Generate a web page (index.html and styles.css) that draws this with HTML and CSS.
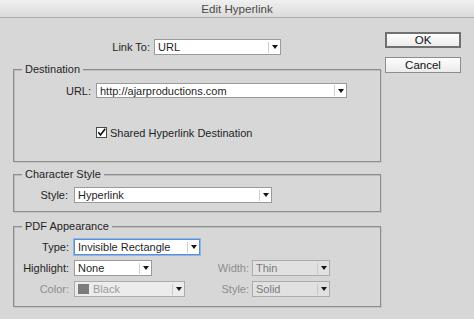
FILE: index.html
```html
<!DOCTYPE html>
<html>
<head>
<meta charset="utf-8">
<link rel="stylesheet" href="styles.css">
</head>
<body>
<div class="titlebar">Edit Hyperlink</div>
<div class="main">
  <div class="left">
    <div class="link-row">
      <span class="lbl lbl-link">Link To:</span>
      <div class="dd w-link"><span class="dd-text">URL</span><span class="dd-arrow"></span></div>
    </div>

    <div class="group g-dest">
      <div class="legend">Destination</div>
      <div class="url-row">
        <span class="lbl lbl-url">URL:</span>
        <div class="dd w-url"><span class="dd-text">http://ajarproductions.com</span><span class="dd-arrow"></span></div>
      </div>
      <div class="check-row">
        <svg class="checkbox" width="11" height="11" viewBox="0 0 11 11">
          <rect x="0.5" y="0.5" width="10" height="10" fill="#fff" stroke="#4a4a4a"/>
          <polyline points="2.3,5.2 4.5,8 9.2,1.8" fill="none" stroke="#111" stroke-width="1.6"/>
        </svg>
        <span>Shared Hyperlink Destination</span>
      </div>
    </div>

    <div class="group g-char">
      <div class="legend">Character Style</div>
      <div class="style-row">
        <span class="lbl lbl-style">Style:</span>
        <div class="dd w-style"><span class="dd-text">Hyperlink</span><span class="dd-arrow"></span></div>
      </div>
    </div>

    <div class="group g-pdf">
      <div class="legend">PDF Appearance</div>
      <div class="pdf-grid">
        <span class="lbl c1">Type:</span>
        <div class="dd w-type focus"><span class="dd-text">Invisible Rectangle</span><span class="dd-arrow"></span></div>

        <span class="lbl c1">Highlight:</span>
        <div class="dd w-high"><span class="dd-text">None</span><span class="dd-arrow"></span></div>
        <span class="lbl c3 dim">Width:</span>
        <div class="dd w-small disabled"><span class="dd-text">Thin</span><span class="dd-arrow"></span></div>

        <span class="lbl c1 dim">Color:</span>
        <div class="dd w-color disabled light"><span class="swatch"></span><span class="dd-text sw-text">Black</span><span class="dd-arrow"></span></div>
        <span class="lbl c3 dim">Style:</span>
        <div class="dd w-small disabled"><span class="dd-text">Solid</span><span class="dd-arrow"></span></div>
      </div>
    </div>
  </div>

  <div class="right">
    <button class="btn btn-default">OK</button>
    <button class="btn">Cancel</button>
  </div>
</div>
</body>
</html>
```

FILE: styles.css
```css
html, body {
  margin: 0;
  padding: 0;
}
body {
  width: 474px;
  height: 319px;
  overflow: hidden;
  background: #d7d7d7;
  font-family: "Liberation Sans", Arial, sans-serif;
  font-size: 11px;
  color: #1f1f1f;
}
.titlebar {
  height: 17px;
  border-bottom: 1px solid #adadad;
  background: linear-gradient(#f0f0f0, #dbdbdb);
  text-align: center;
  line-height: 17px;
  font-size: 11.6px;
  color: #4a4a4a;
}
.main {
  display: flex;
  padding-left: 13px;
}
.left {
  width: 368px;
}
.right {
  margin-left: 4px;
  padding-top: 14px;
  display: flex;
  flex-direction: column;
  gap: 9px;
}
.btn {
  box-sizing: border-box;
  width: 76px;
  height: 16px;
  padding: 0;
  border: 1px solid #8c8c8c;
  background: linear-gradient(#fdfdfd, #ebebeb);
  font-family: "Liberation Sans", Arial, sans-serif;
  font-size: 11.5px;
  line-height: 13px;
  color: #111;
}
.btn-default {
  border: 2px solid #707070;
  line-height: 11px;
}
.lbl {
  text-align: right;
  flex-shrink: 0;
  white-space: nowrap;
}
.dd {
  box-sizing: border-box;
  height: 16px;
  border: 1px solid #9a9a9a;
  background: #fff;
  display: flex;
  align-items: center;
}
.dd-text {
  flex: 1;
  padding-left: 3px;
  line-height: 14px;
  white-space: nowrap;
  overflow: hidden;
}
.dd-arrow {
  width: 11px;
  height: 11px;
  border-left: 1px solid #d0d0d0;
  display: flex;
  align-items: center;
  justify-content: center;
}
.dd-arrow::after {
  content: "";
  border-left: 3px solid transparent;
  border-right: 3px solid transparent;
  border-top: 4px solid #151515;
}
.link-row {
  margin-top: 21px;
  height: 16px;
  display: flex;
  align-items: center;
}
.lbl-link {
  width: 137px;
  margin-right: 4px;
}
.w-link { width: 127px; }

.group {
  box-sizing: border-box;
  border: 1px solid #8e8e8e;
  box-shadow: inset 1px 1px 0 #bcbcbc, 1px 1px 0 #c4c4c4;
}
.legend {
  margin-top: -7px;
  margin-left: 8px;
  padding: 0 3px;
  width: fit-content;
  height: 13px;
  line-height: 13px;
  background: #d7d7d7;
}
.g-dest {
  margin-top: 14px;
  height: 93px;
}
.url-row {
  margin-top: 7px;
  display: flex;
  align-items: center;
}
.lbl-url {
  width: 77px;
  margin-right: 5px;
}
.w-url {
  width: 251px;
  height: 15px;
}
.check-row {
  margin-top: 28px;
  padding-left: 82px;
  height: 13px;
  display: flex;
  align-items: center;
  gap: 3px;
}
.checkbox { flex-shrink: 0; }

.g-char {
  margin-top: 12px;
  height: 38px;
}
.style-row {
  margin-top: 6px;
  display: flex;
  align-items: center;
}
.lbl-style {
  width: 54px;
  margin-right: 6px;
}
.w-style { width: 198px; }

.g-pdf {
  margin-top: 14px;
  height: 81px;
}
.pdf-grid {
  margin-top: 6px;
  display: grid;
  grid-template-columns: 60px 116px 62px 78px;
  grid-auto-rows: 16px;
  row-gap: 5px;
  align-items: center;
}
.c1 { padding-right: 5px; }
.c3 { padding-right: 3px; }
.dim { color: #8e8e8e; }
.w-type {
  grid-column: 2 / span 3;
  width: 126px;
}
.focus {
  border-color: #5a8fd2;
  box-shadow: 0 0 0 1px #8db5e6;
}
.w-high { width: 78px; grid-column: 2; }
.w-color { width: 111px; }
.w-small { width: 78px; }
.disabled {
  background: #e1e1e1;
  border-color: #ababab;
  color: #7a7a7a;
}
.disabled .dd-arrow { border-left-color: #c9c9c9; }
.light {
  background: #ececec;
  color: #9a9a9a;
}
.swatch {
  width: 11px;
  height: 10px;
  margin-left: 3px;
  background: #7b7b7b;
  flex-shrink: 0;
}
.sw-text { padding-left: 4px; }
```
